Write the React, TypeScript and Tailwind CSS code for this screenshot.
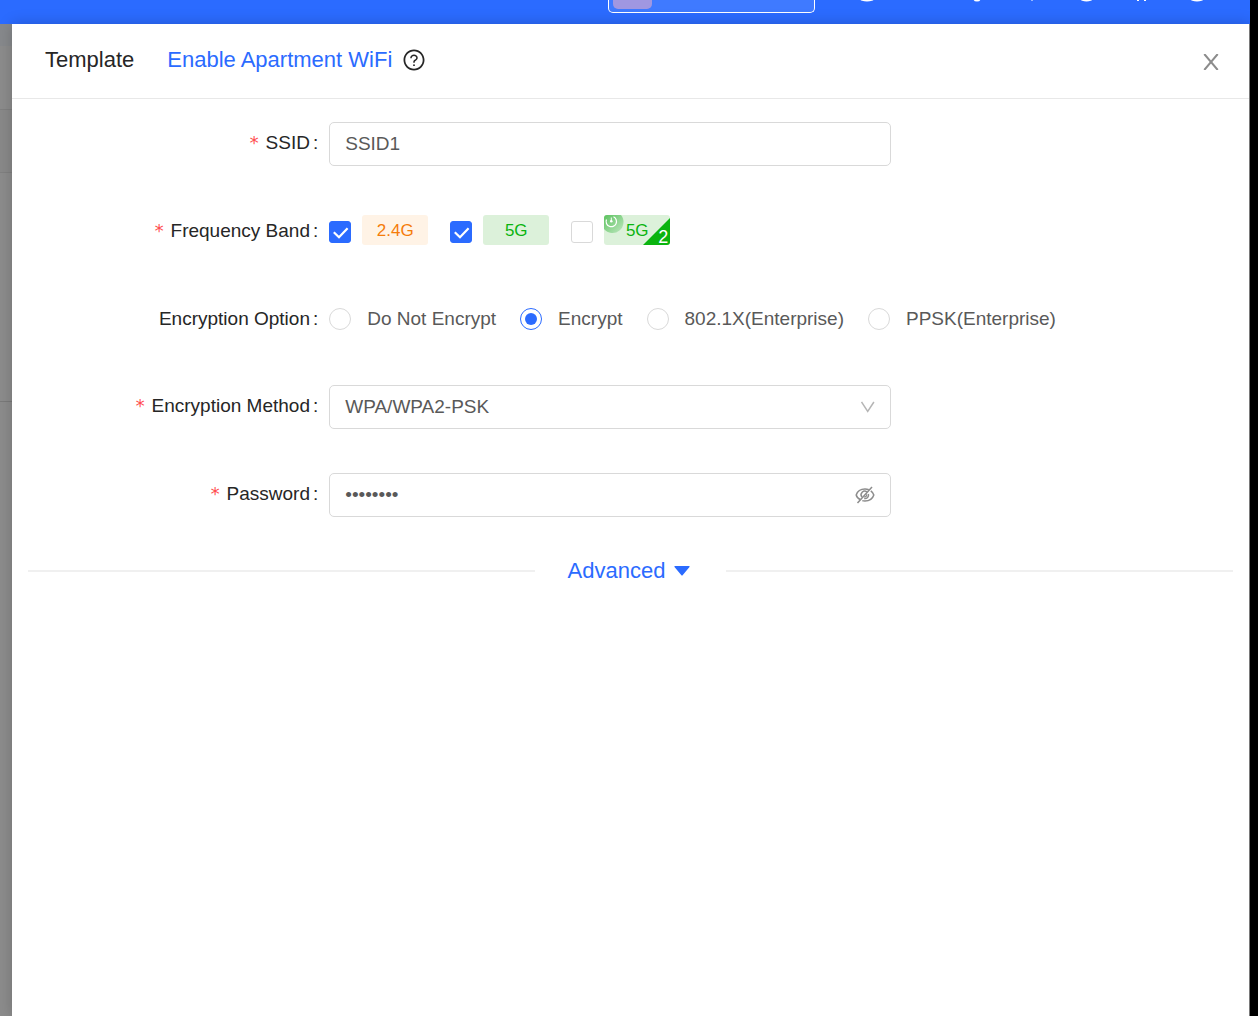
/*
 * WiFi template drawer
 * Header tabs, SSID form and the collapsed "Advanced" section
 */

import { useState } from "react";
import type { ReactNode } from "react";
import { AiOutlineQuestionCircle } from "react-icons/ai";

const encryptionOptions = ["Do Not Encrypt", "Encrypt", "802.1X(Enterprise)", "PPSK(Enterprise)"];

const fieldClass =
  "block h-11 w-full rounded-[5px] border border-[#d9d9d9] bg-white px-[15px] text-[19px] text-[#595959] outline-none focus:border-[#2b6bff]";

function TopBar() {
  return (
    <header className="flex h-6 items-start overflow-hidden bg-[#2b6bff]">
      <div className="flex flex-1 justify-end">
        <div className="h-[13px] w-[207px] rounded-b-[5px] border border-t-0 border-white bg-[#3f7aff] pl-1">
          <div className="h-[9px] w-[39px] rounded-b-[5px] bg-[#a097e1]" />
        </div>
      </div>
      {/* Toolbar icons, scrolled mostly out of view */}
      <svg className="w-[435px] shrink-0" height="4" viewBox="815 0 435 4" fill="#fff">
        <ellipse cx="867" cy="-1" rx="7" ry="2.6" />
        <ellipse cx="977" cy="-1" rx="3.5" ry="2.6" />
        <rect x="1031" y="0" width="2" height="1" opacity="0.5" />
        <ellipse cx="1086.500" cy="-1" rx="6" ry="2.6" />
        <rect x="1137" y="0" width="2" height="1" />
        <rect x="1144" y="0" width="2" height="1" />
        <ellipse cx="1197" cy="-1" rx="6.500" ry="2.6" />
      </svg>
    </header>
  );
}

function FormRow({
  label,
  htmlFor,
  required,
  children,
}: {
  label: string;
  htmlFor?: string;
  required?: boolean;
  children: ReactNode;
}) {
  return (
    <div className="flex items-center">
      <div className="flex w-1/4 items-center justify-end pr-[11px] pb-[2px] text-[19px] leading-6 text-[#262626]">
        {required && (
          <span className="mr-[6px] font-['DejaVu_Sans_Mono',monospace] text-lg leading-5 text-[#ff4d4f]">*</span>
        )}
        <label htmlFor={htmlFor}>{label}</label>
        <span className="ml-[3px]">:</span>
      </div>
      <div className="w-3/4">{children}</div>
    </div>
  );
}

function BandOption({
  id,
  name,
  defaultChecked,
  children,
}: {
  id: string;
  name: string;
  defaultChecked?: boolean;
  children: ReactNode;
}) {
  return (
    <div className="flex items-center gap-[11px]">
      <span className="relative mt-1 size-[22px]">
        <input
          id={id}
          type="checkbox"
          aria-label={name}
          defaultChecked={defaultChecked}
          className="peer block size-[22px] appearance-none rounded-[3px] border border-[#d9d9d9] bg-white checked:border-[#2b6bff] checked:bg-[#2b6bff]"
        />
        <svg
          className="pointer-events-none absolute inset-0 hidden peer-checked:block"
          viewBox="0 0 22 22"
          fill="none"
          stroke="#fff"
          strokeWidth="2.2"
        >
          <path d="M4.800 11.300 L10 16.300 L18.600 7.300" />
        </svg>
      </span>
      <label htmlFor={id}>{children}</label>
    </div>
  );
}

function SecondRadioBadge() {
  return (
    <svg className="absolute inset-0" width="66" height="30" viewBox="0 0 66 30">
      <defs>
        <linearGradient id="cornerFade" x1="0" y1="0" x2="1" y2="1">
          <stop offset="0" stopColor="#5cc25f" />
          <stop offset="1" stopColor="#bfe8c0" />
        </linearGradient>
      </defs>
      <path d="M3 0 H17 A 10 10 0 0 1 0 14 V3 A 3 3 0 0 1 3 0 Z" fill="url(#cornerFade)" />
      <path d="M2.500 4.500 A 5.200 5.200 0 1 0 9.500 1.800" fill="none" stroke="#fff" strokeWidth="1.200" />
      <path d="M7.300 2.500 V6" stroke="#fff" strokeWidth="1" />
      <circle cx="7.300" cy="6.300" r="1.300" fill="#fff" />
      <path d="M66 3 V27 A 3 3 0 0 1 63 30 H39 Z" fill="#0ab40f" />
    </svg>
  );
}

function CloseIcon() {
  return (
    <svg width="16" height="16" viewBox="0 0 16 16" fill="none" stroke="currentColor" strokeWidth="2">
      <path d="M1.300 0 L14.700 16 M14.700 0 L1.300 16" />
    </svg>
  );
}

function EyeOffIcon() {
  return (
    <svg width="20" height="18" viewBox="0 0 20 18" fill="none" stroke="currentColor" strokeWidth="1.500">
      <path d="M5.500 13.800 C3.300 12.800 1.700 10.900 1.200 9 C2.300 5.600 5.700 3 10 3 C11.400 3 12.600 3.200 13.800 3.700" />
      <path d="M15.800 4.900 C17.300 6 18.400 7.500 18.800 9 C17.700 12.400 14.300 15 10 15 C9 15 8.100 14.900 7.300 14.600" />
      <path d="M6.900 11 A3.600 3.600 0 0 1 11.900 5.900 M13.400 8 A3.600 3.600 0 0 1 9.200 12.500" />
      <path d="M9.200 10.600 A1.800 1.800 0 0 0 11.600 8.300" strokeWidth="1.200" />
      <path d="M2.500 17 L17 1" strokeWidth="1.500" />
    </svg>
  );
}

export default function App() {
  const [encryption, setEncryption] = useState("Encrypt");
  const [showPassword, setShowPassword] = useState(false);

  return (
    <div className="min-h-screen bg-black pr-2 font-['Liberation_Sans',Arial,sans-serif]">
      <div className="flex min-h-screen flex-col">
        <TopBar />
        <div className="flex flex-1">
          {/* Dimmed page behind the drawer */}
          <div className="w-3 shrink-0 bg-[#8c8c8c]">
            <div className="h-[22px] bg-[#87898c]" />
            <div className="h-16 border-b border-[#808080]" />
            <div className="h-[63px] border-b border-[#808080] bg-[#898989]" />
            <div className="h-[229px] border-b border-[#7a7a7a]" />
          </div>

          <main className="relative min-w-0 flex-1 border-r border-[#7a7a7a] bg-white shadow-[0_0_14px_rgba(0,0,0,0.2)]">
            {/* Drawer header */}
            <div className="flex h-[75px] items-center border-b border-[#e8e8e8] pr-[30px] pb-[2px] pl-[33px] text-[22px] leading-7">
              <button type="button" className="text-[#262626]">
                Template
              </button>
              <button type="button" className="ml-[33px] text-[#2b6bff]">
                Enable Apartment WiFi
              </button>
              <button type="button" aria-label="Help" className="ml-[10px] text-[#262626]">
                <AiOutlineQuestionCircle size={24} />
              </button>
              <button type="button" aria-label="Close" className="ml-auto pt-[3px] text-[#8c8c8c]">
                <CloseIcon />
              </button>
            </div>

            <form className="px-4 pt-[23px]" onSubmit={(e) => e.preventDefault()}>
              <div className="flex flex-col gap-11">
                <FormRow label="SSID" htmlFor="ssid" required>
                  <div className="max-w-[562px]">
                    <input id="ssid" type="text" defaultValue="SSID1" className={fieldClass} />
                  </div>
                </FormRow>

                <FormRow label="Frequency Band" required>
                  <div className="flex h-11 items-center gap-[22px] pb-1 text-[17px]">
                    <BandOption id="band24" name="2.4G" defaultChecked>
                      <span className="block h-[30px] w-[66px] rounded-[3px] bg-[#fff3e6] text-center leading-8 text-[#f57c0a]">
                        2.4G
                      </span>
                    </BandOption>
                    <BandOption id="band5" name="5G" defaultChecked>
                      <span className="block h-[30px] w-[66px] rounded-[3px] bg-[#dcf1da] text-center leading-8 text-[#0ab40f]">
                        5G
                      </span>
                    </BandOption>
                    <BandOption id="band5b" name="5G radio 2">
                      <span className="relative block h-[30px] w-[66px] rounded-[3px] bg-[#dcf1da] text-center leading-8 text-[#0ab40f]">
                        <SecondRadioBadge />
                        <span className="relative">5G</span>
                        <span className="absolute right-[2px] bottom-0 text-lg leading-4 text-white">2</span>
                      </span>
                    </BandOption>
                  </div>
                </FormRow>

                <FormRow label="Encryption Option">
                  <div className="flex h-[43px] items-center gap-6 pb-[2px]">
                    {encryptionOptions.map((option) => (
                      <label key={option} className="flex items-center gap-4 text-[19px] leading-6 text-[#595959]">
                        <input
                          type="radio"
                          name="encryption"
                          checked={encryption === option}
                          onChange={() => setEncryption(option)}
                          className="size-[22px] appearance-none rounded-full border border-[#d9d9d9] bg-white bg-clip-content p-1 checked:border-[#2b6bff] checked:bg-[#2b6bff]"
                        />
                        {option}
                      </label>
                    ))}
                  </div>
                </FormRow>

                <FormRow label="Encryption Method" htmlFor="method" required>
                  <div className="relative max-w-[562px]">
                    <select id="method" defaultValue="WPA/WPA2-PSK" className={`${fieldClass} appearance-none`}>
                      <option>WPA/WPA2-PSK</option>
                      <option>WPA2-PSK</option>
                    </select>
                    <svg
                      className="pointer-events-none absolute top-4 right-4 text-[#b5b5b5]"
                      width="14"
                      height="12"
                      viewBox="0 0 14 12"
                      fill="none"
                      stroke="currentColor"
                      strokeWidth="1.500"
                    >
                      <path d="M0.500 1 L6.700 10.300 L12.900 1" />
                    </svg>
                  </div>
                </FormRow>

                <FormRow label="Password" htmlFor="password" required>
                  <div className="relative max-w-[562px]">
                    <input
                      id="password"
                      type={showPassword ? "text" : "password"}
                      defaultValue="password"
                      className={fieldClass}
                    />
                    <button
                      type="button"
                      aria-label="Show password"
                      onClick={() => setShowPassword(!showPassword)}
                      className="absolute top-[13px] right-4 text-[#8c8c8c]"
                    >
                      <EyeOffIcon />
                    </button>
                  </div>
                </FormRow>
              </div>

              <div className="mt-10 flex items-center gap-[33px]">
                <div className="h-[2px] flex-1 bg-[#f0f0f0]" />
                <button
                  type="button"
                  className="flex items-center gap-[9px] pr-[3px] text-[22px] leading-7 text-[#2b6bff]"
                >
                  Advanced
                  <svg width="16" height="10" viewBox="0 0 16 10" fill="currentColor">
                    <path d="M1 0 H15 Q16 0 15.500 1 L8.800 9 Q8 10 7.200 9 L0.500 1 Q0 0 1 0 Z" />
                  </svg>
                </button>
                <div className="h-[2px] flex-1 bg-[#f0f0f0]" />
              </div>
            </form>
          </main>
        </div>
      </div>
    </div>
  );
}
